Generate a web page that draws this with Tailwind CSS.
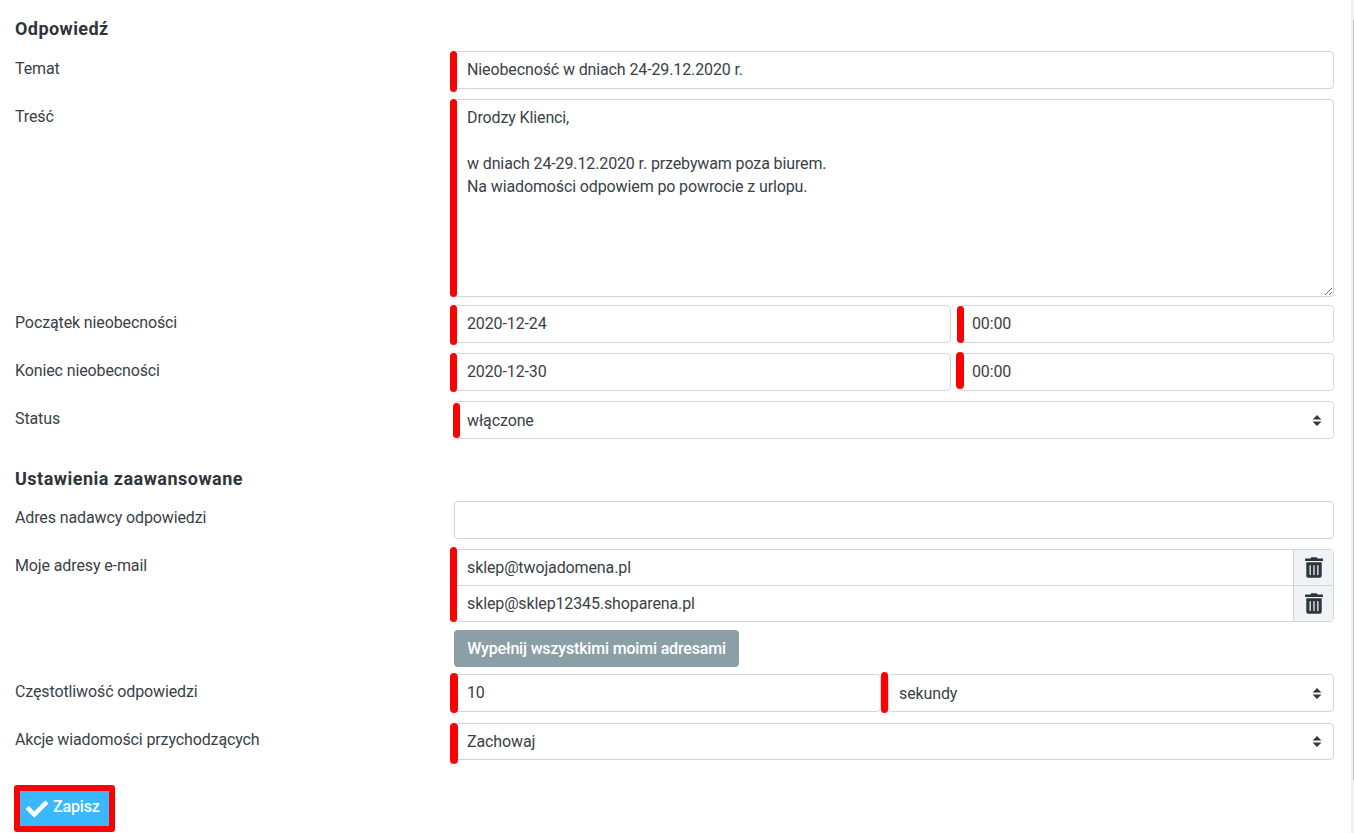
<!DOCTYPE html>
<html lang="pl">
<head>
  <meta charset="UTF-8">
  <title>Odpowiedź</title>
  <script src="https://cdn.jsdelivr.net/npm/@tailwindcss/browser@4"></script>
</head>
<body class="bg-white overflow-hidden font-['Roboto',sans-serif] text-[16px] tracking-[-0.12px] text-[#3a3f47]">
<div class="flex h-[833px] overflow-hidden">
  <form class="flex-1 pl-[15px] pr-[17px]">

    <!-- Odpowiedz -->
    <h2 class="h-[51px] pt-[18px] text-[18px] leading-[22px] tracking-[0.42px] font-bold text-[#2f343b]">Odpowiedź</h2>

    <div class="flex mb-[10px]">
      <label class="w-[439px] pt-[6px] leading-[24px]">Temat</label>
      <div class="relative flex-1">
        <input type="text" value="Nieobecność w dniach 24-29.12.2020 r." class="w-full h-[38px] px-[12px] pb-[2px] border border-[#d3d5db] rounded-[4px] outline-none">
        <span class="absolute left-[-4px] top-0 w-[7px] h-[41px] rounded-[4px] bg-[#ff0000]"></span>
      </div>
    </div>

    <div class="flex mb-[8px]">
      <label class="w-[439px] pt-[6px] leading-[24px]">Treść</label>
      <div class="relative flex-1 h-[198px]">
        <textarea class="block w-full h-[198px] px-[12px] py-[6px] leading-[23px] border border-[#d3d5db] rounded-[4px] outline-none">Drodzy Klienci,

w dniach 24-29.12.2020 r. przebywam poza biurem.
Na wiadomości odpowiem po powrocie z urlopu.</textarea>
        <span class="absolute left-[-4px] top-0 w-[7px] h-[198px] rounded-[4px] bg-[#ff0000]"></span>
      </div>
    </div>

    <div class="flex mb-[10px]">
      <label class="w-[439px] pt-[6px] leading-[24px]">Początek nieobecności</label>
      <div class="relative flex-1 flex gap-[8px]">
        <input type="text" value="2020-12-24" class="w-[497px] h-[38px] px-[12px] pb-[2px] border border-[#d3d5db] rounded-[4px] outline-none">
        <div class="relative flex-1">
          <input type="text" value="00:00" class="w-full h-[38px] px-[12px] pb-[2px] border border-[#d3d5db] rounded-[4px] outline-none">
          <span class="absolute left-[-2px] top-[1px] w-[7px] h-[37px] rounded-[4px] bg-[#ff0000]"></span>
        </div>
        <span class="absolute left-[-4px] top-0 w-[7px] h-[40px] rounded-[4px] bg-[#ff0000]"></span>
      </div>
    </div>

    <div class="flex mb-[10px]">
      <label class="w-[439px] pt-[6px] leading-[24px]">Koniec nieobecności</label>
      <div class="relative flex-1 flex gap-[8px]">
        <input type="text" value="2020-12-30" class="w-[497px] h-[38px] px-[12px] pb-[2px] border border-[#d3d5db] rounded-[4px] outline-none">
        <div class="relative flex-1">
          <input type="text" value="00:00" class="w-full h-[38px] px-[12px] pb-[2px] border border-[#d3d5db] rounded-[4px] outline-none">
          <span class="absolute left-[-3px] top-[-1px] w-[8px] h-[37px] rounded-[4px] bg-[#ff0000]"></span>
        </div>
        <span class="absolute left-[-4px] top-0 w-[7px] h-[39px] rounded-[4px] bg-[#ff0000]"></span>
      </div>
    </div>

    <div class="flex">
      <label class="w-[439px] pt-[6px] leading-[24px]">Status</label>
      <div class="relative flex-1">
        <select class="w-full h-[38px] px-[12px] pt-[2px] appearance-none bg-white border border-[#d3d5db] rounded-[4px] outline-none"><option>włączone</option></select>
        <svg class="absolute right-[12px] top-[14px] w-[10px] h-[11px]" viewBox="0 0 10 11"><path fill="#343a40" d="M5 0 9.5 4.5H.5zM5 11 .5 6.5h9z"/></svg>
        <span class="absolute left-[-1px] top-[2px] w-[7px] h-[35px] rounded-[4px] bg-[#ff0000]"></span>
      </div>
    </div>

    <!-- Ustawienia zaawansowane -->
    <h2 class="h-[62px] pt-[29px] text-[18px] leading-[22px] tracking-[0.48px] font-bold text-[#2f343b]">Ustawienia zaawansowane</h2>

    <div class="flex mb-[10px]">
      <label class="w-[439px] pt-[5px] leading-[24px]">Adres nadawcy odpowiedzi</label>
      <input type="text" class="flex-1 h-[38px] px-[12px] border border-[#d3d5db] rounded-[4px] outline-none">
    </div>

    <div class="flex mb-[8px]">
      <label class="w-[439px] pt-[5px] leading-[24px]">Moje adresy e-mail</label>
      <div class="relative flex-1">
        <div class="flex h-[37px] border border-[#d3d5db] rounded-t-[4px]">
          <input type="text" value="sklep@twojadomena.pl" class="flex-1 px-[12px] outline-none">
          <button type="button" class="flex w-[40px] items-center justify-center border-l border-[#d3d5db] bg-[#f0f2f5]">
            <svg class="w-[18px] h-[21px]" viewBox="0 0 448 512"><path fill="#2f343b" d="M32 464a48 48 0 0 0 48 48h288a48 48 0 0 0 48-48V128H32zm272-256a16 16 0 0 1 32 0v224a16 16 0 0 1-32 0zm-96 0a16 16 0 0 1 32 0v224a16 16 0 0 1-32 0zm-96 0a16 16 0 0 1 32 0v224a16 16 0 0 1-32 0zM432 32H312l-9.4-18.7A24 24 0 0 0 281.1 0H166.8a23.72 23.72 0 0 0-21.4 13.3L136 32H16A16 16 0 0 0 0 48v32a16 16 0 0 0 16 16h416a16 16 0 0 0 16-16V48a16 16 0 0 0-16-16z"/></svg>
          </button>
        </div>
        <div class="flex h-[37px] -mt-px border border-[#d3d5db] rounded-b-[4px]">
          <input type="text" value="sklep@sklep12345.shoparena.pl" class="flex-1 px-[12px] outline-none">
          <button type="button" class="flex w-[40px] items-center justify-center border-l border-[#d3d5db] bg-[#f0f2f5]">
            <svg class="w-[18px] h-[21px]" viewBox="0 0 448 512"><path fill="#2f343b" d="M32 464a48 48 0 0 0 48 48h288a48 48 0 0 0 48-48V128H32zm272-256a16 16 0 0 1 32 0v224a16 16 0 0 1-32 0zm-96 0a16 16 0 0 1 32 0v224a16 16 0 0 1-32 0zm-96 0a16 16 0 0 1 32 0v224a16 16 0 0 1-32 0zM432 32H312l-9.4-18.7A24 24 0 0 0 281.1 0H166.8a23.72 23.72 0 0 0-21.4 13.3L136 32H16A16 16 0 0 0 0 48v32a16 16 0 0 0 16 16h416a16 16 0 0 0 16-16V48a16 16 0 0 0-16-16z"/></svg>
          </button>
        </div>
        <span class="absolute left-[-4px] top-[-2px] w-[7px] h-[75px] rounded-[4px] bg-[#ff0000]"></span>
      </div>
    </div>

    <div class="pl-[439px] mb-[7px]">
      <button type="button" class="h-[37px] w-[285px] rounded-[4px] bg-[#8c9fa6] tracking-[-0.18px] font-medium text-white text-center">Wypełnij wszystkimi moimi adresami</button>
    </div>

    <div class="flex mb-[11px]">
      <label class="w-[439px] pt-[6px] leading-[24px]">Częstotliwość odpowiedzi</label>
      <div class="relative flex-1 flex gap-[7px]">
        <input type="text" value="10" class="w-[427px] h-[38px] px-[12px] pb-[2px] border border-[#d3d5db] rounded-[4px] outline-none">
        <div class="relative flex-1">
          <select class="w-full h-[38px] px-[10px] pt-[2px] appearance-none bg-white border border-[#d3d5db] rounded-[4px] outline-none"><option>sekundy</option></select>
          <svg class="absolute right-[12px] top-[14px] w-[10px] h-[11px]" viewBox="0 0 10 11"><path fill="#343a40" d="M5 0 9.5 4.5H.5zM5 11 .5 6.5h9z"/></svg>
          <span class="absolute left-[-7px] top-[-2px] w-[7px] h-[41px] rounded-[4px] bg-[#ff0000]"></span>
        </div>
        <span class="absolute left-[-4px] top-[-1px] w-[8px] h-[40px] rounded-[4px] bg-[#ff0000]"></span>
      </div>
    </div>

    <div class="flex mb-[25px]">
      <label class="w-[439px] pt-[5px] leading-[24px]">Akcje wiadomości przychodzących</label>
      <div class="relative flex-1">
        <select class="w-full h-[37px] px-[12px] appearance-none bg-white border border-[#d3d5db] rounded-[4px] outline-none"><option>Zachowaj</option></select>
        <svg class="absolute right-[12px] top-[13px] w-[10px] h-[11px]" viewBox="0 0 10 11"><path fill="#343a40" d="M5 0 9.5 4.5H.5zM5 11 .5 6.5h9z"/></svg>
        <span class="absolute left-[-4px] top-0 w-[8px] h-[41px] rounded-[4px] bg-[#ff0000]"></span>
      </div>
    </div>

    <button type="submit" class="flex items-center gap-[5px] w-[101px] h-[47px] -ml-px pl-[6px] border-[6px] border-[#ff0000] rounded-[3px] bg-[#3bb8ff] tracking-[-0.17px] font-medium text-white">
      <svg class="w-[22px] h-[22px]" viewBox="0 0 512 512"><path fill="#fff" d="M173.898 439.404l-166.4-166.4c-9.997-9.997-9.997-26.206 0-36.204l36.203-36.204c9.997-9.998 26.207-9.998 36.204 0L192 312.69 432.095 72.596c9.997-9.997 26.207-9.997 36.204 0l36.203 36.204c9.997 9.997 9.997 26.206 0 36.204l-294.4 294.401c-9.998 9.997-26.207 9.997-36.204-.001z"/></svg>
      <span class="-mt-[3px]">Zapisz</span>
    </button>
  </form>

  <!-- scrollbar -->
  <div class="w-[3px] bg-[#f1f1f1] pt-[20px] pl-[2px]">
    <div class="h-[760px] bg-[#c1c1c1]"></div>
  </div>
</div>
</body>
</html>
